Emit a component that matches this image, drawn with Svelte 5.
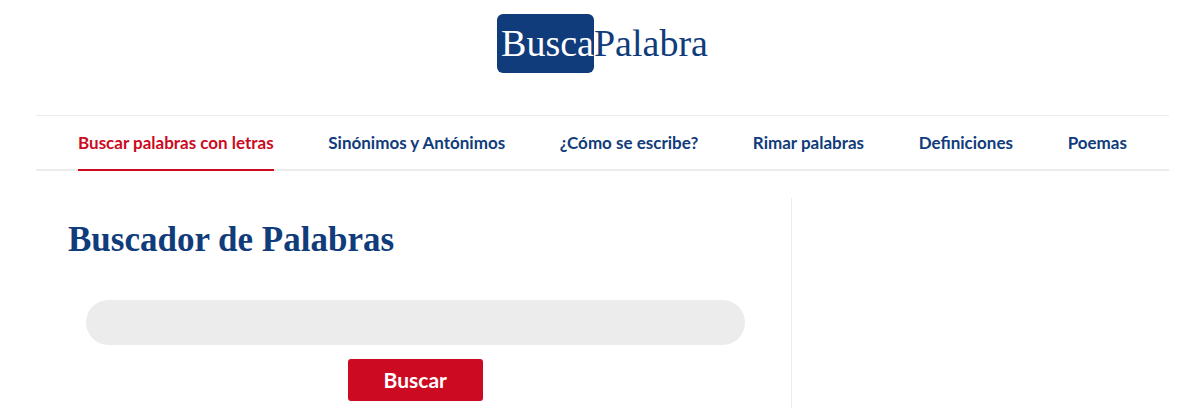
<script lang="ts">
  const links = [
    { label: 'Buscar palabras con letras', href: '#letras' },
    { label: 'Sinónimos y Antónimos', href: '#sinonimos' },
    { label: '¿Cómo se escribe?', href: '#como-se-escribe' },
    { label: 'Rimar palabras', href: '#rimar' },
    { label: 'Definiciones', href: '#definiciones' },
    { label: 'Poemas', href: '#poemas' },
  ];

  let active = $state(0);
  let query = $state('');
</script>

<div class="page">
  <header>
    <a class="logo" href="#inicio"><span class="logo-box">Busca</span><span>Palabra</span></a>
  </header>

  <nav>
    {#each links as link, i}
      <a href={link.href} class:active={i === active} onclick={() => (active = i)}>{link.label}</a>
    {/each}
  </nav>

  <div class="content">
    <main>
      <h1>Buscador de Palabras</h1>
      <form onsubmit={(e) => e.preventDefault()}>
        <input type="text" aria-label="Palabra" bind:value={query} />
        <button type="submit">Buscar</button>
      </form>
    </main>
    <aside></aside>
  </div>
</div>

<style>
  :global(body) {
    margin: 0;
    background: #fff;
  }

  .page {
    padding: 0 31px 0 36px;
    font-family: Lato, sans-serif;
    color: #103c7b;
  }

  header {
    display: flex;
    justify-content: center;
    padding: 14px 0 42px;
  }

  .logo {
    display: flex;
    align-items: center;
    font-family: "Liberation Serif", serif;
    font-size: 38px;
    line-height: 59px;
    color: #103c7b;
    text-decoration: none;
  }

  .logo-box {
    padding-left: 4px;
    border-radius: 6px;
    background: #103c7b;
    color: #fff;
  }

  nav {
    display: flex;
    justify-content: space-between;
    padding: 0 42px;
    border-top: 1px solid #ececec;
    border-bottom: 2px solid #ececec;
  }

  nav a {
    margin-bottom: -2px;
    border-bottom: 2px solid transparent;
    font-size: 17px;
    font-weight: 700;
    line-height: 53px;
    color: #103c7b;
    text-decoration: none;
    white-space: nowrap;
  }

  nav a.active {
    color: #cc0a22;
    border-bottom-color: #cc0a22;
  }

  .content {
    display: flex;
    padding-top: 27px;
  }

  main {
    box-sizing: border-box;
    width: 66.6%;
    padding: 14px 46px 7px 32px;
  }

  aside {
    flex: 1;
    border-left: 1px solid #ececec;
  }

  h1 {
    margin: 0 0 32px;
    font-family: "Liberation Serif", serif;
    font-size: 35px;
    line-height: 56px;
    font-weight: 700;
  }

  form {
    display: flex;
    flex-direction: column;
    align-items: center;
    gap: 14px;
    padding-left: 18px;
  }

  input {
    box-sizing: border-box;
    width: 100%;
    height: 45px;
    padding: 0 24px;
    border: 0;
    border-radius: 24px;
    background: #ececec;
    font-size: 18px;
  }

  button {
    padding: 0 36px;
    border: 0;
    border-radius: 3px;
    background: #cc0a22;
    color: #fff;
    font-family: Lato, sans-serif;
    font-size: 21px;
    font-weight: 700;
    line-height: 42px;
  }
</style>
